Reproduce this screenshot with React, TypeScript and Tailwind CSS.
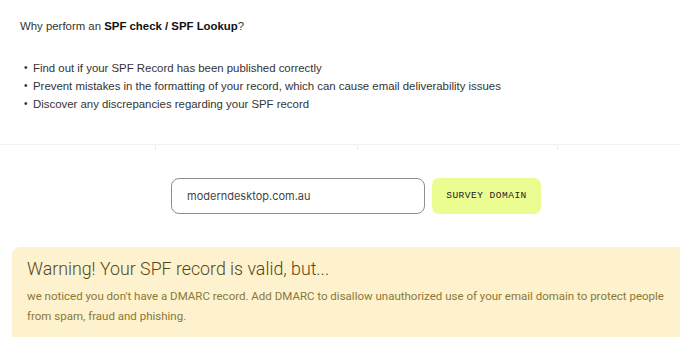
export default function App() {
  const reasons = [
    "Find out if your SPF Record has been published correctly",
    "Prevent mistakes in the formatting of your record, which can cause email deliverability issues",
    "Discover any discrepancies regarding your SPF record",
  ];

  return (
    <div className="w-[680px] h-[337px] overflow-hidden bg-white font-['Liberation_Sans',Arial,sans-serif]">
      {/* intro */}
      <div className="pl-5 pt-[18px] text-[11.4px] leading-[16px] text-[#333]">
        <p>
          Why perform an <b className="text-[#111]">SPF check / SPF Lookup</b>?
        </p>
        <ul className="mt-[25px] pl-[4px]">
          {reasons.map((r) => (
            <li key={r} className="flex items-start leading-[18px]">
              <span className="w-[9px] shrink-0 text-[10px]">•</span>
              <span>{r}</span>
            </li>
          ))}
        </ul>
      </div>

      {/* divider with ticks */}
      <div className="mt-[31px] h-px bg-[#f2f2f2] grid grid-cols-[155px_202px_200px_1fr]">
        <div />
        <div className="border-l border-[#eeeeee] h-[6px]" />
        <div className="border-l border-[#eeeeee] h-[6px]" />
        <div className="border-l border-[#eeeeee] h-[6px]" />
      </div>

      {/* search */}
      <div className="mt-[33px] flex pl-[171px] gap-[7px]">
        <div className="w-[254px] h-[36px] rounded-[8px] border border-[#8e8e8e] flex items-center pl-[15px] text-[11px] text-[#444] font-['Inter',sans-serif]">
          moderndesktop.com.au
        </div>
        <button className="w-[109px] h-[36px] rounded-[7px] bg-[#ebfc91] text-[9.5px] tracking-[0.5px] text-[#222] font-['Liberation_Mono',monospace]">
          SURVEY DOMAIN
        </button>
      </div>

      {/* warning */}
      <div className="mt-[33px] ml-[12px] h-[120px] rounded-tl-[8px] bg-[#fdf2cd] pl-[15px] pt-[11px] font-['Roboto',sans-serif]">
        <h3 className="text-[17.8px] leading-[22px] font-light text-[#55461a]">
          Warning! Your SPF record is valid, but...
        </h3>
        <p className="mt-[6px] text-[11.5px] leading-[20px] text-[#8a7838] pr-[8px]">
          we noticed you don't have a DMARC record. Add DMARC to disallow unauthorized use of your email domain to protect people from spam, fraud and phishing.
        </p>
      </div>
    </div>
  );
}
